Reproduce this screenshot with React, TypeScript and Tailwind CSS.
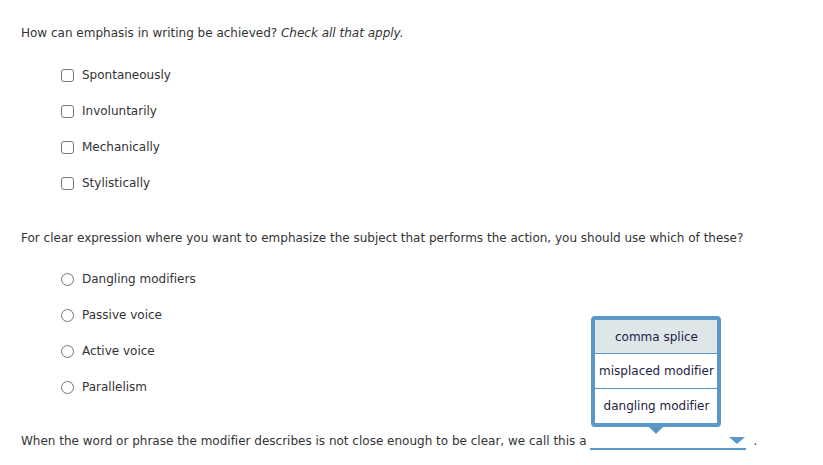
import React from "react";

const font = { fontFamily: '"DejaVu Sans", Verdana, sans-serif', fontVariantLigatures: "none" as const };

function Check({ label }: { label: string }) {
  return (
    <div className="flex h-[36px] items-center pl-[40px]">
      <span className="box-border h-[13px] w-[13px] rounded-[3px] border border-[#777] bg-white" />
      <span className="ml-[8px]">{label}</span>
    </div>
  );
}

function Radio({ label }: { label: string }) {
  return (
    <div className="flex h-[36px] items-center pl-[40px]">
      <span className="box-border h-[13px] w-[13px] rounded-full border border-[#777] bg-white" />
      <span className="ml-[8px]">{label}</span>
    </div>
  );
}

export default function App() {
  return (
    <div
      className="h-[465px] w-[823px] overflow-hidden bg-white pl-[21px] text-[12px] leading-[16px] text-[#333]"
      style={font}
    >
      <div className="pt-[25px]">
        How can emphasis in writing be achieved? <i>Check all that apply.</i>
      </div>
      <div className="mt-[16px]">
        <Check label="Spontaneously" />
        <Check label="Involuntarily" />
        <Check label="Mechanically" />
        <Check label="Stylistically" />
      </div>
      <div className="mt-[29px]">
        For clear expression where you want to emphasize the subject that performs the action, you should use which of these?
      </div>
      <div className="mt-[15px]">
        <Radio label="Dangling modifiers" />
        <Radio label="Passive voice" />
        <Radio label="Active voice" />
        <Radio label="Parallelism" />
      </div>
      <div className="mt-[28px] flex items-start">
        <span>When the word or phrase the modifier describes is not close enough to be clear, we call this a</span>
        <span className="relative ml-[4px] inline-block h-[17px] w-[156px] border-b-2 border-[#5b97c9]">
          <span className="absolute right-[1px] top-[4px] h-0 w-0 border-x-[8px] border-t-[7px] border-x-transparent border-t-[#5b97c9]" />
          <div className="absolute bottom-[21px] left-[1px] box-border w-[130px] rounded-[4px] border-4 border-[#5b97c9] bg-white text-center text-[#1d2240]">
            <div className="flex h-[34px] items-center justify-center border-b border-[#5b97c9] bg-[#dee6ea]">comma splice</div>
            <div className="flex h-[35px] items-center justify-center border-b border-[#5b97c9]">misplaced modifier</div>
            <div className="flex h-[34px] items-center justify-center">dangling modifier</div>
            <span className="absolute left-1/2 top-full mt-[4px] h-0 w-0 -translate-x-1/2 border-x-[7px] border-t-[7px] border-x-transparent border-t-[#5b97c9]" />
          </div>
        </span>
        <span className="ml-[7px]">.</span>
      </div>
    </div>
  );
}
